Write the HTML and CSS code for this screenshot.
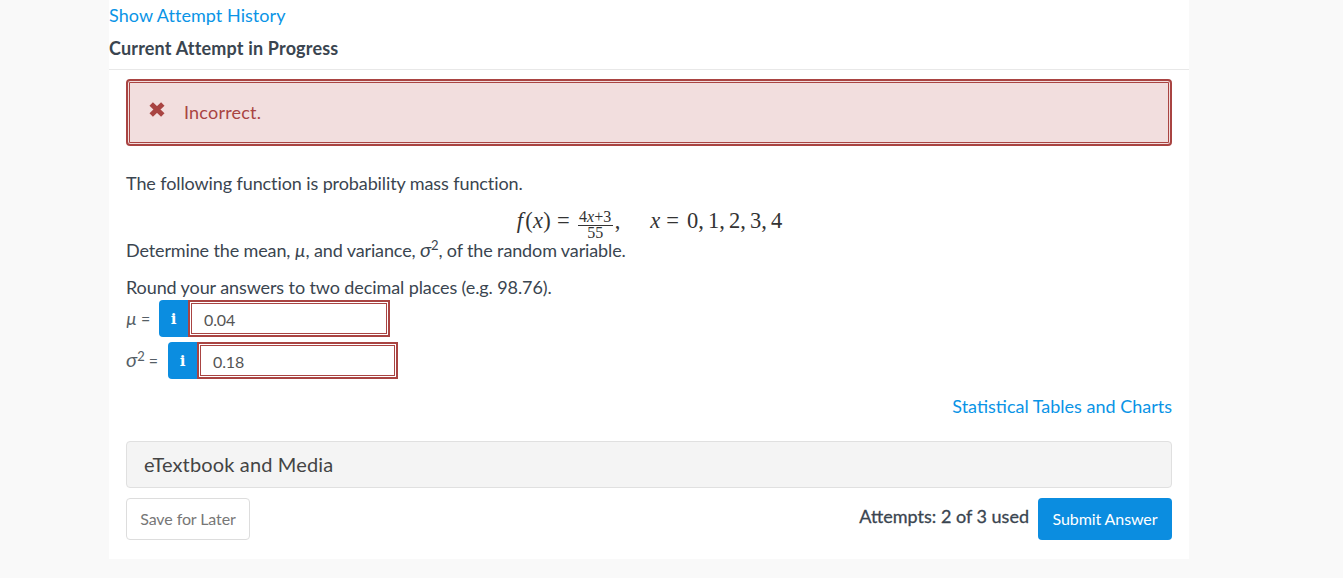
FILE: index.html
```html
<!DOCTYPE html>
<html lang="en">
<head>
<meta charset="utf-8">
<title>Current Attempt</title>
<link rel="stylesheet" href="styles.css">
</head>
<body>
<main class="panel">
  <header class="head">
    <a class="history link">Show Attempt History</a>
    <h2 class="attempt-title">Current Attempt in Progress</h2>
  </header>
  <section class="content">
    <div class="alert">
      <svg class="alert-x" viewBox="0 0 18 17" width="18" height="17" aria-hidden="true"><path d="M3.2 3 14.8 14M14.8 3 3.2 14"/></svg>
      <span class="alert-text">Incorrect.</span>
    </div>
    <p class="intro">The following function is probability mass function.</p>
    <div class="formula">
      <span class="f fx"><i>f</i>&#8202;(<i>x</i>)</span>
      <span class="f eq">=</span>
      <span class="frac"><span class="num">4<i>x</i>+3</span><span class="den">55</span></span>
      <span class="f">,</span>
      <span class="f domain"><i>x</i><span class="eq">=</span>0, 1, 2, 3, 4</span>
    </div>
    <p class="determine">Determine the mean, <i class="mu">µ</i>, and variance, <i class="sigma">σ</i><sup>2</sup>, of the random variable.</p>
    <p class="round">Round your answers to two decimal places (e.g. 98.76).</p>
    <div class="answer answer-mu">
      <span class="label"><i class="mu">µ</i> =</span>
      <span class="info">i</span>
      <span class="input">0.04</span>
    </div>
    <div class="answer answer-var">
      <span class="label"><i class="sigma">σ</i><sup>2</sup> =</span>
      <span class="info">i</span>
      <span class="input">0.18</span>
    </div>
    <div class="tables"><a class="link">Statistical Tables and Charts</a></div>
    <div class="media">eTextbook and Media</div>
    <div class="actions">
      <button class="save" type="button">Save for Later</button>
      <div class="submit-wrap">
        <span class="attempts">Attempts: 2 of 3 used</span>
        <button class="submit" type="button">Submit Answer</button>
      </div>
    </div>
  </section>
</main>
</body>
</html>
```
FILE: styles.css
```css
* { box-sizing: border-box; }
html, body { margin: 0; padding: 0; }
body {
  background: #f9f9f9;
  font-family: Lato, "Noto Sans", sans-serif;
  color: #3a4550;
  height: 578px;
  overflow: hidden;
}
.panel {
  margin-left: 109px;
  width: 1080px;
  height: 559px;
  background: #fff;
}
.link { color: #0a94e6; }
.head {
  height: 70px;
  border-bottom: 1px solid #e8e8e8;
}
.history {
  display: block;
  font-size: 18px;
  line-height: 22px;
  letter-spacing: 0.05px;
  padding-top: 4px;
  height: 27px;
}
.attempt-title {
  margin: 10px 0 0;
  font-size: 18px;
  line-height: 22px;
  font-weight: 700;
  letter-spacing: 0.18px;
  color: #3a4550;
}
.content { padding: 9px 17px 0; }
.alert {
  height: 67px;
  background: #f2dede;
  border: 2px solid #a94442;
  box-shadow: inset 0 0 0 1px #f2dede, inset 0 0 0 2px #a94442;
  border-radius: 4px;
  display: flex;
  align-items: center;
  padding: 0 0 2px 20px;
  color: #a94442;
  font-size: 18px;
}
.alert-text { letter-spacing: 0.2px; }
.alert-x {
  fill: none;
  stroke: #a94442;
  stroke-width: 5;
  margin-right: 18px;
  margin-top: -4px;
}
.intro, .determine, .round {
  margin: 0;
  font-size: 18px;
  line-height: 24px;
  letter-spacing: -0.1px;
}
.intro { margin-top: 25px; }
.formula {
  display: flex;
  justify-content: center;
  align-items: center;
  height: 43px;
  padding: 8px 0 0 1px;
  font-family: "Liberation Serif", serif;
  color: #333;
}
.f { font-size: 22.5px; white-space: pre; word-spacing: -1.5px; }
.fx { letter-spacing: 0.2px; }
.eq { margin: 0 8px 0 6px; }
.frac {
  display: inline-flex;
  flex-direction: column;
  align-items: center;
  width: 35px;
  margin: 8px 2px 0 0;
  font-size: 16px;
  line-height: 16px;
}
.num { width: 100%; text-align: center; border-bottom: 1px solid #333; }
.den { margin-top: -1px; }
.domain { margin-left: 30px; }
.determine { margin-top: 0; letter-spacing: -0.13px; }
.mu { font-size: 18px; line-height: 0; }
.sigma { font-size: 20px; line-height: 0; }
.determine sup, .label sup { font-size: 13px; line-height: 0; }
.round { margin-top: 13px; }
.answer {
  display: flex;
  align-items: center;
  height: 37px;
}
.answer-mu { margin-top: 1px; }
.answer-var { margin-top: 5px; }
.label { font-size: 16px; color: #555e66; }
.answer-mu .label { width: 33px; }
.answer-var .label { width: 42px; }
.info {
  width: 29px;
  height: 37px;
  background: #0b8de0;
  border-radius: 4px 0 0 4px;
  color: #fff;
  font-family: "DejaVu Serif", serif;
  font-weight: 700;
  font-size: 15px;
  display: flex;
  align-items: center;
  justify-content: center;
}
.input {
  height: 37px;
  border: 2px solid #a94442;
  box-shadow: inset 0 0 0 1px #fff, inset 0 0 0 2px #a94442;
  background: #fff;
  padding-left: 14px;
  font-size: 16px;
  line-height: 35px;
  letter-spacing: -0.1px;
  color: #555;
}
.answer-mu .input { width: 202px; }
.answer-var .input { width: 201px; }
.tables {
  margin-top: 15px;
  text-align: right;
  font-size: 18px;
  line-height: 24px;
}
.media {
  margin-top: 23px;
  height: 47px;
  background: #f4f4f4;
  border: 1px solid #e0e0e0;
  border-radius: 4px;
  padding-left: 17px;
  font-size: 20px;
  line-height: 45px;
  letter-spacing: 0.15px;
  color: #444;
}
.actions {
  margin-top: 10px;
  display: flex;
  justify-content: space-between;
  align-items: flex-start;
}
.save {
  width: 124px;
  height: 42px;
  background: #fff;
  border: 1px solid #ddd;
  border-radius: 4px;
  font-family: inherit;
  font-size: 16px;
  letter-spacing: -0.1px;
  color: #777;
  padding: 0 0 2px;
}
.submit-wrap { display: flex; align-items: flex-start; }
.attempts {
  font-size: 18px;
  line-height: 22px;
  -webkit-text-stroke: 0.3px #3a4550;
  margin: 7px 9px 0 0;
}
.submit {
  width: 134px;
  height: 42px;
  background: #0b8de0;
  border: 0;
  border-radius: 4px;
  color: #fff;
  font-family: inherit;
  font-size: 16px;
  letter-spacing: -0.1px;
  padding: 0 0 2px;
}
```
